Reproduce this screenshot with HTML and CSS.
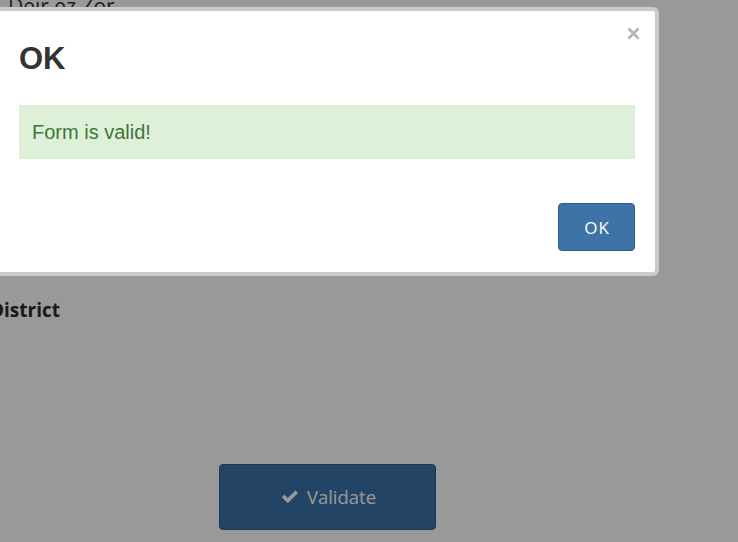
FILE: index.html
```html
<!DOCTYPE html>
<html>
<head>
<meta charset="utf-8">
<link rel="stylesheet" href="styles.css">
</head>
<body>
<div class="page">
  <div class="value">Deir ez Zor</div>
  <div class="label">District</div>
  <button class="validate">
    <svg class="check" width="18" height="15" viewBox="0 0 18 15"><path d="M0.8 8.2 L3.4 5.6 L6.8 9 L14.4 1.4 L17 4 L6.8 14.2 Z" fill="currentColor"/></svg>
    <span>Validate</span>
  </button>
</div>
<div class="backdrop"></div>
<div class="modal">
  <button class="close" aria-label="Close">
    <svg width="13" height="13" viewBox="0 0 13 13"><path d="M1.5 1.5 L11.5 11.5 M11.5 1.5 L1.5 11.5" stroke="currentColor" stroke-width="2.6" stroke-linecap="butt"/></svg>
  </button>
  <h4 class="title">OK</h4>
  <div class="alert">Form is valid!</div>
  <div class="footer">
    <button class="ok">OK</button>
  </div>
</div>
</body>
</html>
```
FILE: styles.css
```css
html, body {
  margin: 0;
  padding: 0;
  background: #ffffff;
  width: 738px;
  height: 542px;
  overflow: hidden;
}
.page {
  font-family: "Open Sans", "Liberation Sans", sans-serif;
  color: #333333;
}
.value {
  font-size: 21px;
  line-height: 28px;
  margin-top: -8px;
  padding-left: 8px;
}
.label {
  font-size: 19px;
  font-weight: bold;
  line-height: 26px;
  margin-top: 277px;
  margin-left: -10px;
  color: #2a2a2a;
}
.validate {
  margin-top: 141px;
  margin-left: 219px;
  width: 217px;
  height: 66px;
  background: #3b72a8;
  border: 1px solid #2a5f92;
  border-radius: 4px;
  color: #ffffff;
  font-family: "Open Sans", "Liberation Sans", sans-serif;
  font-size: 18.5px;
  display: flex;
  align-items: center;
  justify-content: center;
  gap: 8px;
  padding: 0 0 2px 2px;
}
.validate .check {
  display: block;
}
.backdrop {
  position: fixed;
  inset: 0;
  background: rgba(0, 0, 0, 0.4);
}
.modal {
  position: fixed;
  left: -5px;
  top: 7px;
  width: 664px;
  box-sizing: border-box;
  border: 4px solid #cacaca;
  border-radius: 6px;
  background: #ffffff;
  padding: 31px 20px 21px 20px;
  font-family: "Liberation Sans", Arial, sans-serif;
}
.close {
  position: absolute;
  top: 16px;
  right: 15px;
  padding: 0;
  border: 0;
  background: none;
  color: #b3b3b3;
  width: 13px;
  height: 13px;
  display: block;
}
.close svg {
  display: block;
}
.title {
  margin: 0;
  font-size: 31px;
  line-height: 34px;
  font-weight: bold;
  color: #333333;
}
.alert {
  margin-top: 29px;
  height: 54px;
  box-sizing: border-box;
  background: #dff0d8;
  color: #3c763d;
  font-size: 20px;
  padding: 0 13px;
  display: flex;
  align-items: center;
}
.footer {
  margin-top: 44px;
  display: flex;
  justify-content: flex-end;
}
.ok {
  width: 77px;
  height: 48px;
  box-sizing: border-box;
  background: #3d73a6;
  border: 1px solid #2b5d8c;
  border-radius: 4px;
  color: #ffffff;
  font-family: "Open Sans", "Liberation Sans", sans-serif;
  font-size: 17px;
  letter-spacing: 1px;
  padding: 0 0 0 1px;
}
```
